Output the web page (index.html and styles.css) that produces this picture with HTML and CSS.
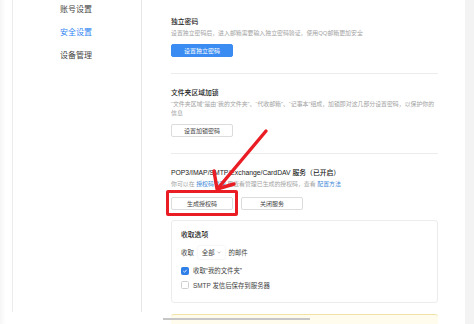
FILE: index.html
```html
<!DOCTYPE html>
<html lang="zh-CN">
<head>
    <meta charset="UTF-8" />
    <meta name="viewport" content="width=device-width, initial-scale=1" />
    <title>安全设置</title>
    <link rel="stylesheet" href="styles.css">
</head>
<body>
<div class="page">
    <aside class="sidebar">
        <ul class="menu">
            <li>账号设置</li>
            <li class="active">安全设置</li>
            <li>设备管理</li>
        </ul>
    </aside>

    <main class="content">
        <section class="block">
            <h3>独立密码</h3>
            <p class="tip">设置独立密码后，进入邮箱需要输入独立密码验证，使用QQ邮箱更加安全</p>
            <button class="btn primary">设置独立密码</button>
        </section>

        <section class="block">
            <h3>文件夹区域加锁</h3>
            <p class="tip">“文件夹区域”是由“我的文件夹”、“代收邮箱”、“记事本”组成，加锁即对这几部分设置密码，以保护你的信息</p>
            <button class="btn">设置加锁密码</button>
        </section>

        <section class="block last">
            <h3>POP3/IMAP/SMTP/Exchange/CardDAV 服务（已开启）</h3>
            <p class="tip">你可以在 <a href="#">授权码管理</a> 里查看管理已生成的授权码，查看 <a href="#">配置方法</a></p>
            <div class="btn-row">
                <button class="btn">生成授权码</button>
                <button class="btn">关闭服务</button>
            </div>

            <div class="options">
                <h4>收取选项</h4>
                <div class="opt-row">
                    收取
                    <span class="select">全部
                        <svg class="caret" viewBox="0 0 6 4" width="4" height="3"><path d="M0.8 0.8 L3 3 L5.2 0.8" fill="none" stroke="#999" stroke-width="0.9"/></svg>
                    </span>
                    的邮件
                </div>
                <label class="check first"><span class="box on">
                    <svg viewBox="0 0 10 10" width="8" height="8"><path d="M2.2 5.2 L4.2 7.1 L7.9 3" fill="none" stroke="#fff" stroke-width="1.4"/></svg>
                </span>收取“我的文件夹”</label>
                <label class="check"><span class="box"></span>SMTP 发信后保存到服务器</label>
            </div>

            <div class="notice"></div>
        </section>
    </main>

    <div class="gutter"></div>
</div>

<!-- annotation drawn over the screenshot -->
<div class="mark-box"></div>
<svg class="mark-arrow" width="474" height="324" viewBox="0 0 474 324">
    <path d="M266 131 L219 187" stroke="#ea1c24" stroke-width="3.4" stroke-linecap="round" fill="none"/>
    <path d="M214 171 L217 189 L234 184" stroke="#ea1c24" stroke-width="3.4" stroke-linecap="round" stroke-linejoin="round" fill="none"/>
</svg>
<div class="scroll-thumb"></div>
</body>
</html>
```

FILE: styles.css
```css
* {
    box-sizing: border-box;
}
body {
    margin: 0;
    background-color: #fff;
    font-family: "Liberation Sans", "Noto Sans CJK SC", sans-serif;
    color: #333;
    overflow: hidden;
}
.page {
    display: flex;
    height: 324px;
}
.sidebar {
    width: 142px;
    flex: none;
    padding-left: 12px;
    background: linear-gradient(to right, #f6f6f6 0, #fff 6px);
}
.menu {
    list-style: none;
    margin: 0;
    padding: 5px 0 0 47px;
    height: 312px;
    background-color: #fff;
    border-left: 1px solid #ececec;
    border-right: 1px solid #e6e6e6;
}
.menu li {
    font-size: 8px;
    line-height: 10px;
    margin-bottom: 13px;
    color: #444;
}
.menu li.active {
    color: #2f84f2;
}
.content {
    width: 323px;
    flex: none;
    padding: 17px 27px 0 29px;
}
.block {
    padding-bottom: 16px;
    border-bottom: 1px solid #ececec;
    margin-bottom: 14px;
}
.block.last {
    border-bottom: none;
}
h3 {
    margin: 0;
    font-size: 6.8px;
    line-height: 10px;
    font-weight: 500;
    color: #222;
}
.tip {
    margin: 1.5px 0 0;
    font-size: 5.9px;
    line-height: 9px;
    color: #a3a3a3;
}
.tip a {
    color: #3c87d6;
    text-decoration: none;
}
.btn {
    display: block;
    margin-top: 6.5px;
    width: 62px;
    height: 13px;
    padding: 0;
    font-family: inherit;
    font-size: 6px;
    color: #444;
    background-color: #fff;
    border: 1px solid #dcdcdc;
    border-radius: 2px;
}
.btn.primary {
    color: #fff;
    background-color: #3a8cf3;
    border-color: #3a8cf3;
}
.btn-row {
    display: flex;
    gap: 8px;
    margin-top: 8.5px;
}
.btn-row .btn {
    margin-top: 0;
}
.options {
    margin-top: 10px;
    height: 83px;
    padding: 9px 9px 0;
    border: 1px solid #ececec;
    border-radius: 3px;
}
h4 {
    margin: 0;
    font-size: 6.8px;
    line-height: 10px;
    font-weight: 500;
    color: #222;
}
.opt-row {
    display: flex;
    align-items: center;
    gap: 4px;
    margin-top: 5px;
    height: 14px;
    font-size: 6.4px;
    color: #444;
}
.select {
    display: inline-flex;
    align-items: center;
    gap: 2px;
    height: 13px;
    padding: 0 4px;
    border-radius: 2px;
    box-shadow: 0 0 2px rgba(0,0,0,0.12);
}
.caret {
    display: block;
}
.check {
    display: flex;
    align-items: center;
    gap: 4px;
    margin-top: 5.5px;
    height: 9px;
    font-size: 6.4px;
    color: #444;
}
.check.first {
    margin-top: 7px;
}
.box {
    width: 8px;
    height: 8px;
    border: 1px solid #cfcfcf;
    border-radius: 1.5px;
    background-color: #fff;
    display: flex;
    align-items: center;
    justify-content: center;
}
.box.on {
    background-color: #2f7fe8;
    border-color: #2f7fe8;
}
.box svg {
    display: block;
}
.notice {
    margin-top: 11px;
    height: 30px;
    border-top: 1px solid #f1e2a6;
    background-color: #fffcee;
    border-radius: 3px 3px 0 0;
}
.gutter {
    flex: 1;
    background-color: #f3f3f4;
}
.mark-box {
    position: absolute;
    left: 166px;
    top: 190px;
    width: 72px;
    height: 26px;
    border: 3px solid #ea1c24;
    border-radius: 2px;
}
.mark-arrow {
    position: absolute;
    left: 0;
    top: 0;
}
.scroll-thumb {
    position: absolute;
    left: 163px;
    top: 318px;
    width: 147px;
    height: 2px;
    background-color: #c6c6c6;
}
```
